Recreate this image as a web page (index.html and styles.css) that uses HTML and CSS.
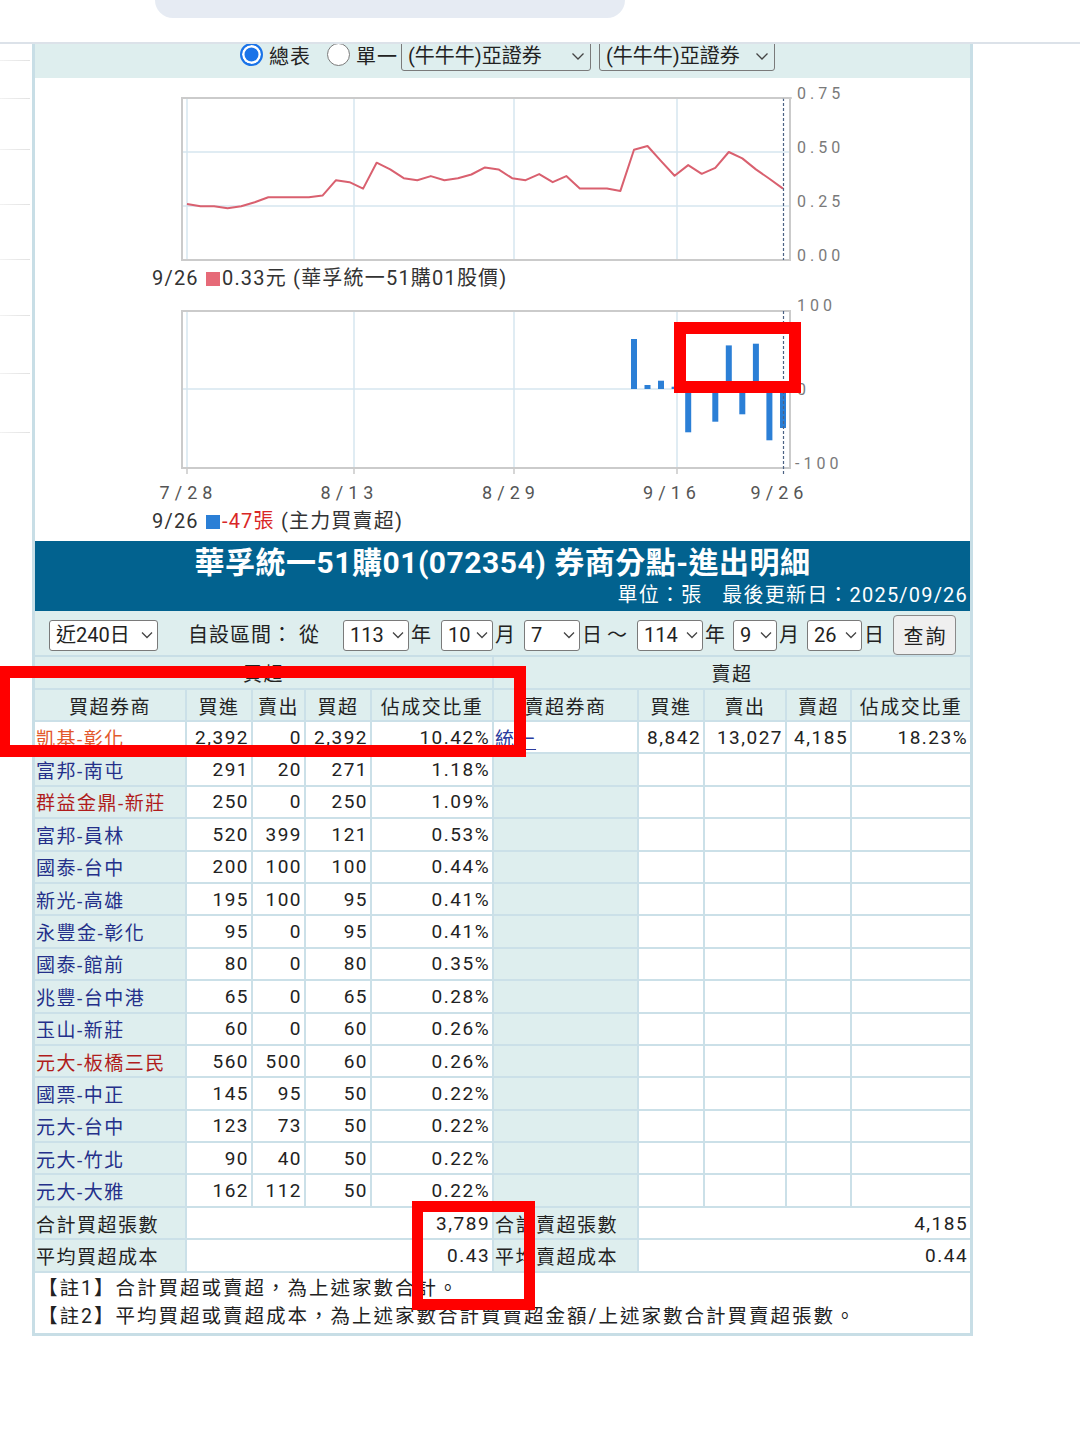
FILE: index.html
```html
<!DOCTYPE html>
<html lang="zh-Hant">
<head>
<meta charset="utf-8">
<title>華孚統一51購01 券商分點-進出明細</title>
<link rel="stylesheet" href="styles.css">
</head>
<body>
<div class="topbar"><div class="pill"></div></div>
<div class="page">
  <aside class="side">
    <i class="l1"></i><i class="l2"></i><i class="l3"></i><i class="l4"></i><i class="l5"></i><i class="l6"></i><i class="l7"></i><i class="l8"></i>
  </aside>
  <main class="wrap">
    <div class="picker">
      <span class="radio on"></span><span class="plbl">總表</span>
      <span class="radio off"></span><span class="plbl p2">單一</span>
      <span class="psel ps1">(牛牛牛)亞證券<svg class="chev" width="14" height="9" viewBox="0 0 14 9"><path d="M1.5 1.5 L7 7 L12.5 1.5"/></svg></span>
      <span class="psel ps2">(牛牛牛)亞證券<svg class="chev" width="14" height="9" viewBox="0 0 14 9"><path d="M1.5 1.5 L7 7 L12.5 1.5"/></svg></span>
    </div>

    <section class="charts">
      <svg class="chart c1" width="720" height="180" viewBox="140 84 720 180">
        <g class="grid">
          <line x1="187" y1="99" x2="187" y2="259"/>
          <line x1="354" y1="99" x2="354" y2="259"/>
          <line x1="514" y1="99" x2="514" y2="259"/>
          <line x1="677" y1="99" x2="677" y2="259"/>
          <line x1="183" y1="152" x2="789" y2="152"/>
          <line x1="183" y1="206" x2="789" y2="206"/>
        </g>
        <rect class="box" x="182" y="98" width="608" height="162"/>
        <polyline class="price" points="187,204 200.5,206.3 214.1,206.3 227.6,208.3 241.2,206.3 254.7,202.3 268.3,197.3 281.8,197.3 295.4,197.3 308.9,197.3 322.5,195.6 336,180.2 349.5,182.2 363.1,188.6 376.6,162.7 390.2,169.4 403.7,178.2 417.3,180.2 430.8,176.1 444.4,180.2 457.9,178.2 471.4,174.5 485,167.4 498.5,169.4 512.1,178.2 525.6,180.2 539.2,174.1 552.7,182.2 566.3,176.1 579.8,188.6 593.4,188.6 606.9,188.6 620.4,190.9 634,149.7 647.5,146 661.1,161.1 674.6,175.8 688.2,165.1 701.7,173.8 715.3,167.8 728.8,152 742.3,158.4 755.9,169.4 769.4,178.8 783,188.6"/>
        <line class="cur" x1="783.5" y1="98" x2="783.5" y2="260"/>
        <line class="tick" x1="783" y1="98" x2="792" y2="98"/>
        <g class="ylab">
          <text x="797" y="99">0.75</text>
          <text x="797" y="153">0.50</text>
          <text x="797" y="207">0.25</text>
          <text x="797" y="261">0.00</text>
        </g>
      </svg>
      <div class="legend">9/26 <span class="sq pink"></span>0.33元 (華孚統一51購01股價)</div>

      <svg class="chart c2" width="720" height="216" viewBox="140 292 720 216">
        <g class="grid">
          <line x1="187" y1="312" x2="187" y2="467"/>
          <line x1="354" y1="312" x2="354" y2="467"/>
          <line x1="514" y1="312" x2="514" y2="467"/>
          <line x1="677" y1="312" x2="677" y2="467"/>
          <line x1="183" y1="389" x2="789" y2="389"/>
        </g>
        <g class="ticks">
          <line x1="187" y1="468" x2="187" y2="474"/>
          <line x1="354" y1="468" x2="354" y2="474"/>
          <line x1="514" y1="468" x2="514" y2="474"/>
          <line x1="677" y1="468" x2="677" y2="474"/>
        </g>
        <rect class="box" x="182" y="311" width="608" height="157"/>
        <g class="bars">
          <rect x="631" y="339" width="6" height="50"/>
          <rect x="644.5" y="385" width="6" height="4"/>
          <rect x="658" y="380.7" width="6" height="8.3"/>
          <rect x="671.6" y="386.7" width="6" height="2.3"/>
          <rect x="685.2" y="389" width="6" height="43.3"/>
          <rect x="712.3" y="389" width="6" height="32.7"/>
          <rect x="725.8" y="345.4" width="6" height="43.6"/>
          <rect x="739.3" y="389" width="6" height="25.3"/>
          <rect x="752.9" y="343.7" width="6" height="45.3"/>
          <rect x="766.4" y="389" width="6" height="51.3"/>
          <rect x="780" y="389" width="6" height="39"/>
        </g>
        <line class="cur" x1="783.5" y1="311" x2="783.5" y2="474"/>
        <g class="ylab">
          <text x="797" y="311">100</text>
          <text x="797" y="395">0</text>
          <text x="795" y="469">-100</text>
        </g>
        <g class="xlab">
          <text x="188.5" y="499">7/28</text>
          <text x="349.5" y="499">8/13</text>
          <text x="511" y="499">8/29</text>
          <text x="672" y="499">9/16</text>
          <text x="779.5" y="499">9/26</text>
        </g>
      </svg>
      <div class="legend lg2">9/26 <span class="sq blue"></span><span class="neg">-47張</span> (主力買賣超)</div>
    </section>

    <header class="title">
      <h1>華孚統一51購01(072354) 券商分點-進出明細</h1>
      <div class="sub">單位：張<span class="gap"></span>最後更新日：2025/09/26</div>
    </header>

    <div class="controls">
      <span class="sel w109">近240日<svg class="chev" width="12" height="8" viewBox="0 0 12 8"><path d="M1 1.5 L6 6.5 L11 1.5"/></svg></span>
      <span class="txt t1">自設區間： 從</span>
      <span class="sel w66">113<svg class="chev" width="12" height="8" viewBox="0 0 12 8"><path d="M1 1.5 L6 6.5 L11 1.5"/></svg></span>
      <span class="txt t2">年</span>
      <span class="sel w52">10<svg class="chev" width="12" height="8" viewBox="0 0 12 8"><path d="M1 1.5 L6 6.5 L11 1.5"/></svg></span>
      <span class="txt t3">月</span>
      <span class="sel w56">7<svg class="chev" width="12" height="8" viewBox="0 0 12 8"><path d="M1 1.5 L6 6.5 L11 1.5"/></svg></span>
      <span class="txt t4">日 ～</span>
      <span class="sel w66">114<svg class="chev" width="12" height="8" viewBox="0 0 12 8"><path d="M1 1.5 L6 6.5 L11 1.5"/></svg></span>
      <span class="txt t5">年</span>
      <span class="sel w44">9<svg class="chev" width="12" height="8" viewBox="0 0 12 8"><path d="M1 1.5 L6 6.5 L11 1.5"/></svg></span>
      <span class="txt t5">月</span>
      <span class="sel w55">26<svg class="chev" width="12" height="8" viewBox="0 0 12 8"><path d="M1 1.5 L6 6.5 L11 1.5"/></svg></span>
      <span class="txt t6">日</span>
      <span class="btn">查詢</span>
    </div>

    <table class="tbl">
      <colgroup>
        <col class="k151"><col class="k66"><col class="k53"><col class="k66"><col class="k122">
        <col class="k145"><col class="k66"><col class="k82"><col class="k65"><col class="k119">
      </colgroup>
      <thead>
        <tr class="h"><th colspan="5">買超</th><th colspan="5">賣超</th></tr>
        <tr class="h"><th>買超券商</th><th>買進</th><th>賣出</th><th>買超</th><th>佔成交比重</th><th>賣超券商</th><th>買進</th><th>賣出</th><th>賣超</th><th>佔成交比重</th></tr>
      </thead>
      <tbody>
        <tr class="d first"><td class="nm"><a class="hot">凱基-彰化</a></td><td>2,392</td><td>0</td><td>2,392</td><td>10.42%</td><td class="nm"><a class="ul">統一</a></td><td>8,842</td><td>13,027</td><td>4,185</td><td>18.23%</td></tr>
        <tr class="d"><td class="nm"><a>富邦-南屯</a></td><td>291</td><td>20</td><td>271</td><td>1.18%</td><td class="nm"></td><td></td><td></td><td></td><td></td></tr>
        <tr class="d"><td class="nm"><a class="red">群益金鼎-新莊</a></td><td>250</td><td>0</td><td>250</td><td>1.09%</td><td class="nm"></td><td></td><td></td><td></td><td></td></tr>
        <tr class="d"><td class="nm"><a>富邦-員林</a></td><td>520</td><td>399</td><td>121</td><td>0.53%</td><td class="nm"></td><td></td><td></td><td></td><td></td></tr>
        <tr class="d"><td class="nm"><a>國泰-台中</a></td><td>200</td><td>100</td><td>100</td><td>0.44%</td><td class="nm"></td><td></td><td></td><td></td><td></td></tr>
        <tr class="d"><td class="nm"><a>新光-高雄</a></td><td>195</td><td>100</td><td>95</td><td>0.41%</td><td class="nm"></td><td></td><td></td><td></td><td></td></tr>
        <tr class="d"><td class="nm"><a>永豐金-彰化</a></td><td>95</td><td>0</td><td>95</td><td>0.41%</td><td class="nm"></td><td></td><td></td><td></td><td></td></tr>
        <tr class="d"><td class="nm"><a>國泰-館前</a></td><td>80</td><td>0</td><td>80</td><td>0.35%</td><td class="nm"></td><td></td><td></td><td></td><td></td></tr>
        <tr class="d"><td class="nm"><a>兆豐-台中港</a></td><td>65</td><td>0</td><td>65</td><td>0.28%</td><td class="nm"></td><td></td><td></td><td></td><td></td></tr>
        <tr class="d"><td class="nm"><a>玉山-新莊</a></td><td>60</td><td>0</td><td>60</td><td>0.26%</td><td class="nm"></td><td></td><td></td><td></td><td></td></tr>
        <tr class="d"><td class="nm"><a class="red">元大-板橋三民</a></td><td>560</td><td>500</td><td>60</td><td>0.26%</td><td class="nm"></td><td></td><td></td><td></td><td></td></tr>
        <tr class="d"><td class="nm"><a>國票-中正</a></td><td>145</td><td>95</td><td>50</td><td>0.22%</td><td class="nm"></td><td></td><td></td><td></td><td></td></tr>
        <tr class="d"><td class="nm"><a>元大-台中</a></td><td>123</td><td>73</td><td>50</td><td>0.22%</td><td class="nm"></td><td></td><td></td><td></td><td></td></tr>
        <tr class="d"><td class="nm"><a>元大-竹北</a></td><td>90</td><td>40</td><td>50</td><td>0.22%</td><td class="nm"></td><td></td><td></td><td></td><td></td></tr>
        <tr class="d"><td class="nm"><a>元大-大雅</a></td><td>162</td><td>112</td><td>50</td><td>0.22%</td><td class="nm"></td><td></td><td></td><td></td><td></td></tr>
        <tr class="t"><td class="lab">合計買超張數</td><td colspan="4">3,789</td><td class="lab">合計賣超張數</td><td colspan="4">4,185</td></tr>
        <tr class="t"><td class="lab">平均買超成本</td><td colspan="4">0.43</td><td class="lab">平均賣超成本</td><td colspan="4">0.44</td></tr>
        <tr class="n"><td colspan="10"><p>【註1】合計買超或賣超，為上述家數合計。</p><p>【註2】平均買超或賣超成本，為上述家數合計買賣超金額/上述家數合計買賣超張數。</p></td></tr>
      </tbody>
    </table>
  </main>
</div>

<div class="mark m1"></div>
<div class="mark m2"></div>
<div class="mark m3"></div>
</body>
</html>
```

FILE: styles.css
```css
* { box-sizing: border-box; margin: 0; padding: 0; }
html, body { background: #ffffff; }
body {
  width: 1080px;
  min-height: 1451px;
  position: relative;
  font-family: "Roboto", "Noto Sans CJK TC", sans-serif;
  color: #222;
}

/* top strip */
.topbar { height: 44px; border-bottom: 2px solid #dce2e9; }
.pill {
  margin-left: 155px; width: 470px; height: 18px;
  background: #e6ebf3; border-radius: 0 0 32px 32px;
}

.page { display: flex; align-items: flex-start; }

.side { width: 32px; display: flex; flex-direction: column; }
.side i {
  display: block; height: 1px; width: 30px;
  background: linear-gradient(to right, #f2f2f2, #e2e2e2);
}
.side .l1 { margin-top: 16px; }
.side .l2 { margin-top: 37px; }
.side .l3 { margin-top: 50px; }
.side .l4 { margin-top: 54px; }
.side .l5 { margin-top: 54px; }
.side .l6 { margin-top: 55px; }
.side .l7 { margin-top: 57px; }
.side .l8 { margin-top: 58px; }

.wrap {
  width: 941px;
  border: 3px solid #c8dee6;
  border-top: 0;
}

/* picker bar */
.picker {
  height: 34px; overflow: hidden; background: #deeeee;
  display: flex; align-items: flex-start; padding-left: 205px;
  font-size: 20px;
}
.radio {
  width: 23px; height: 23px; border-radius: 50%; margin-top: -1px; flex: none;
}
.radio.on {
  background: #1a73e8; border: 2px solid #1a73e8;
  box-shadow: inset 0 0 0 2.5px #ffffff;
}
.radio.off { background: #fff; border: 1.5px solid #7a7a7a; margin-left: 16px; }
.plbl { line-height: 26px; margin-left: 6px; letter-spacing: 1px; color: #222; }
.plbl.p2 { margin-right: 3px; }
.psel {
  display: flex; align-items: center; justify-content: space-between;
  height: 30px; margin-top: -3px; padding: 0 5px 0 6px;
  border: 1.5px solid #7a7a7a; border-radius: 3px;
  line-height: 28px; font-size: 20px;
}
.ps1 { width: 190px; }
.ps2 { width: 176px; margin-left: 8px; }
.chev { flex: none; }
.chev path { fill: none; stroke: #444; stroke-width: 1.3; }

/* charts */
.charts { height: 463px; background: #fff; padding-top: 6px; }
.chart { display: block; margin-left: 105px; }
.grid line { stroke: #d6e6ef; stroke-width: 1.5; }
.ticks line { stroke: #c9c9c9; stroke-width: 1.5; }
.box { fill: none; stroke: #cbcbcb; stroke-width: 2; }
.price { fill: none; stroke: #d9606f; stroke-width: 2; stroke-linejoin: round; }
.cur { stroke: #4c6284; stroke-width: 1.2; stroke-dasharray: 3 2; }
.tick { stroke: #cbcbcb; stroke-width: 1.5; }
.ylab text { font-size: 16px; letter-spacing: 4px; fill: #7a7a7a; }
.xlab text { font-size: 18px; letter-spacing: 5px; fill: #555; text-anchor: middle; }
.bars rect { fill: #2b7fd6; }

.legend {
  height: 28px; line-height: 28px; padding-left: 117px;
  font-size: 20px; letter-spacing: 1.2px; color: #333;
}
.legend.lg2 { height: 26px; line-height: 26px; }
.sq { display: inline-block; width: 14px; height: 14px; vertical-align: -1px; margin: 0 2px 0 1px; }
.sq.pink { background: #e66a78; }
.sq.blue { background: #2b7fd6; }
.neg { color: #d92626; }

/* title */
.title { height: 70px; background: #02628f; color: #fff; padding-top: 2px; }
.title h1 {
  font-size: 30px; font-weight: 700; line-height: 40px; text-align: center;
  letter-spacing: 0.5px;
}
.sub {
  font-size: 20px; line-height: 24px; text-align: right; padding-right: 2px;
  letter-spacing: 1.2px;
}
.gap { display: inline-block; width: 20px; }

/* controls */
.controls {
  height: 46px; background: #deeeee; border-bottom: 2px solid #c8dee6;
  display: flex; align-items: center; padding: 4px 0 0 14px;
  font-size: 20px; color: #222;
}
.sel {
  display: flex; align-items: center; justify-content: space-between;
  height: 31px; padding: 0 4px 0 6px;
  border: 1.5px solid #7a7a7a; border-radius: 3px; background: #fff;
  line-height: 29px; flex: none;
}
.w109 { width: 109px; }
.w66 { width: 66px; }
.w52 { width: 52px; }
.w56 { width: 56px; }
.w44 { width: 44px; }
.w55 { width: 55px; }
.txt { flex: none; margin-left: 2px; white-space: pre; line-height: 30px; }
.t1 { width: 155px; margin-left: 30px; letter-spacing: 1px; }
.t2 { width: 30px; }
.t3 { width: 29px; }
.t4 { width: 55px; }
.t5 { width: 28px; }
.t6 { width: 29px; }
.btn {
  width: 63px; height: 40px; flex: none;
  display: flex; align-items: center; justify-content: center;
  background: #efefef; border: 1.5px solid #8a8a8a; border-radius: 4px;
  letter-spacing: 2px; padding-left: 2px;
}

/* table */
.tbl {
  width: 935px; table-layout: fixed;
  border-collapse: collapse; border-style: hidden;
  font-size: 19px; letter-spacing: 1.5px;
}
.k151 { width: 151px; } .k66 { width: 66px; } .k53 { width: 53px; }
.k122 { width: 122px; } .k145 { width: 145px; } .k82 { width: 82px; }
.k65 { width: 65px; } .k119 { width: 119px; }
.tbl th, .tbl td { border: 2px solid #cbe0e8; }
.tbl th {
  background: #deeeee; font-weight: 400; text-align: center;
  height: 32px; padding: 0; color: #222; white-space: nowrap; overflow: hidden;
}
.tbl td {
  background: #fff; text-align: right; padding: 0 2px 0 0;
  white-space: nowrap; overflow: hidden; color: #222;
}
.tbl tr.d td { height: 32.4px; }
.tbl td.nm { background: #deeeee; text-align: left; padding-left: 1px; }
.tbl tr.first td.nm { background: #fff; }
.nm a { color: #24308a; text-decoration: none; }
.nm a.red { color: #b01c1c; }
.nm a.hot { color: #e2582c; text-decoration: underline; text-underline-offset: 3px; }
.nm a.ul { color: #2b3c9e; text-decoration: underline; text-underline-offset: 3px; }
.tbl tr.t td { height: 32.5px; }
.tbl td.lab { background: #deeeee; text-align: left; padding-left: 1px; }
.tbl tr.n td {
  text-align: left; padding: 2px 0 2px 3px; height: 61px;
  font-size: 19.5px; letter-spacing: 2px;
}
.tbl tr.n p { line-height: 28px; }

/* red annotation boxes drawn over the screenshot */
.mark { position: absolute; border: 12px solid #ff0000; }
.m1 { left: 674px; top: 322px; width: 127px; height: 71px; }
.m2 { left: -2px; top: 666px; width: 528px; height: 91px; }
.m3 { left: 412px; top: 1201px; width: 123px; height: 109px; border-width: 11px; }
```
